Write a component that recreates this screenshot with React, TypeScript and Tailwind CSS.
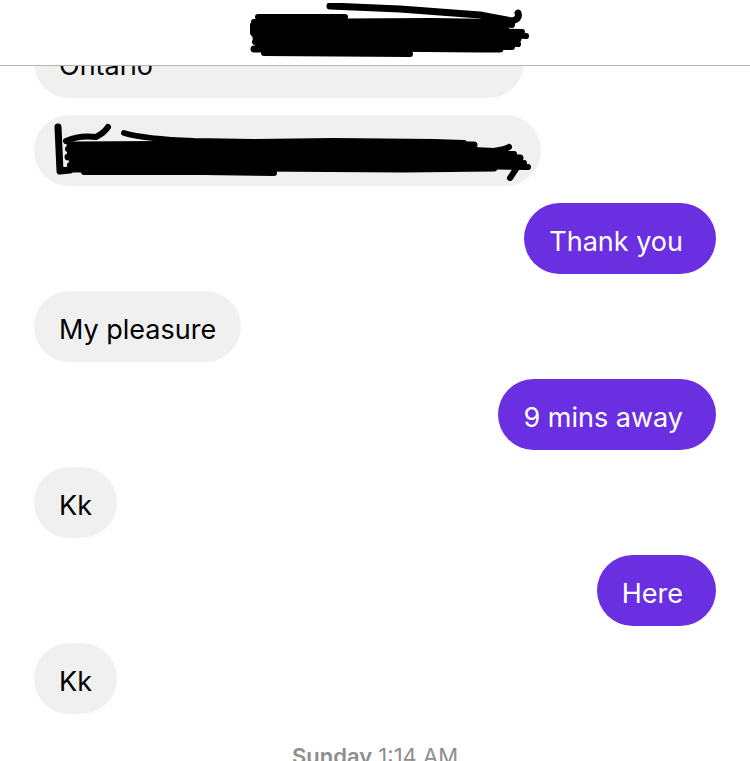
import React from 'react';

type Msg = { id: number; text: string; mine: boolean };

const messages: Msg[] = [
  { id: 1, text: 'My pleasure', mine: false },
  { id: 2, text: '9 mins away', mine: true },
  { id: 3, text: 'Kk', mine: false },
  { id: 4, text: 'Here', mine: true },
  { id: 5, text: 'Kk', mine: false },
];

// Hand-drawn redaction marks over a name or a line of text
function Scribble({ width, height, strokes, weight = 5 }: { width: number; height: number; strokes: string[]; weight?: number }) {
  return (
    <svg width={width} height={height} viewBox={`0 0 ${width} ${height}`} fill="none">
      {strokes.map((d, i) => (
        <path key={i} d={d} stroke="#000" strokeWidth={i % 3 === 0 ? weight + 1 : weight} strokeLinecap="round" strokeLinejoin="round" />
      ))}
    </svg>
  );
}

const headerStrokes = [
  'M80 3 L150 6 L230 12 L262 18 Q270 16 268 10',
  'M8 14 L95 14',
  'M4 19 L180 18 L250 19 L262 22',
  'M3 23 L130 22 L200 23 L256 25',
  'M6 27 L90 26 L190 27 L272 29',
  'M4 31 L160 30 L238 31 L276 33',
  'M6 35 L120 34 L210 35 L268 36',
  'M5 39 L150 38 L230 39 L268 41',
  'M8 43 L100 42 L180 43 L262 44',
  'M4 46 L120 45 L230 46 L250 46',
  'M14 50 L160 51',
  'M3 30 Q1 26 5 22',
];

const bubbleStrokes = [
  'M4 4 L6 48 L16 47',
  'M12 18 Q25 12 42 14 Q50 10 54 4',
  'M70 10 Q90 16 140 18 L200 19 L280 18 L380 19 L410 20',
  'M16 22 L200 21 L330 22 L420 22',
  'M14 26 L150 25 L290 26 L400 26 L440 28 Q452 26 455 24',
  'M16 30 L180 29 L340 30 L460 31',
  'M14 34 L120 33 L260 34 L380 34 L466 35',
  'M18 38 L170 37 L310 38 L450 39 L470 40',
  'M16 42 L140 41 L280 42 L420 43 L474 44',
  'M20 46 L200 45 L350 46 L440 45',
  'M30 49 L150 49 L220 50',
  'M440 40 L455 38 L462 46 L456 55',
];

function Bubble({ text, mine }: { text: string; mine: boolean }) {
  return (
    <div className={`flex ${mine ? 'justify-end' : 'justify-start'}`}>
      <div
        className={`h-[71px] rounded-full pl-[25px] pt-[7px] flex items-center text-[27px] ${
          mine ? 'bg-[#6b2fe2] text-white pr-[33px]' : 'bg-[#f0f0f0] text-black pr-[25px]'
        }`}
      >
        {text}
      </div>
    </div>
  );
}

export default function App() {
  return (
    <div
      className="w-[750px] h-[761px] bg-white overflow-hidden flex flex-col"
      style={{ fontFamily: 'Inter, "Noto Sans", sans-serif' }}
    >
      {/* Conversation header */}
      <div className="h-[66px] shrink-0 border-b border-[#b4b4b4] bg-white relative z-10 flex justify-center pt-[3px] pl-[30px]">
        <Scribble width={280} height={54} strokes={headerStrokes} weight={6} />
      </div>

      {/* Message list, scrolled a little past the first bubble */}
      <div className="flex-1 overflow-hidden">
        <div className="px-[34px] -mt-[39px] flex flex-col gap-[17px]">
          <div className="flex">
            <div className="w-[490px] h-[71px] rounded-full bg-[#f0f0f0] pl-[25px] pt-[7px] flex items-center text-[27px] text-black">
              Ontario
            </div>
          </div>
          <div className="flex">
            <div className="w-[507px] h-[71px] rounded-full bg-[#f0f0f0] pl-[20px] pt-[2px] flex items-center">
              <Scribble width={480} height={58} strokes={bubbleStrokes} weight={6} />
            </div>
          </div>
          <Bubble text="Thank you" mine />
          {messages.map((m) => (
            <Bubble key={m.id} text={m.text} mine={m.mine} />
          ))}
          <div className="pt-[9px] text-center text-[22px] text-[#8e8e8e]">
            <span className="font-semibold">Sunday</span> 1:14 AM
          </div>
        </div>
      </div>
    </div>
  );
}
